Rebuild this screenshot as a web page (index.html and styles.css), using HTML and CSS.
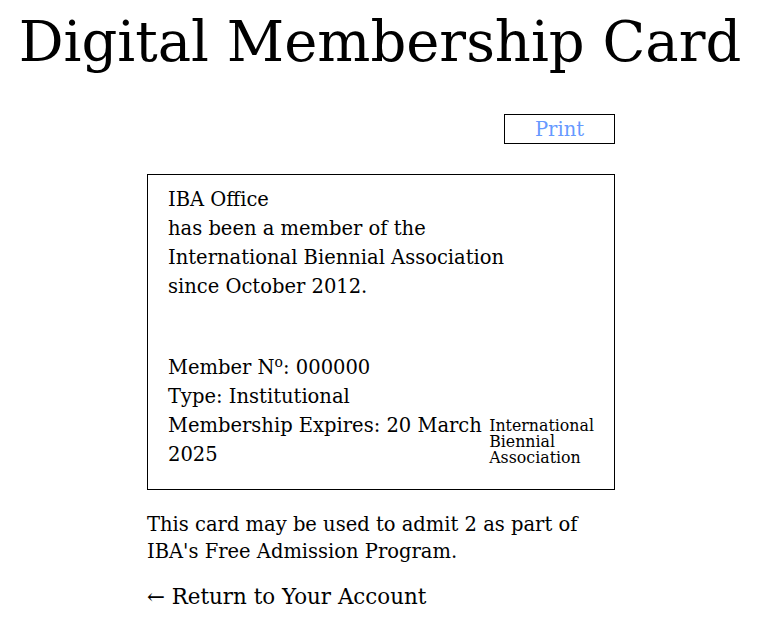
FILE: index.html
```html
<!DOCTYPE html>
<html>
<head>
<meta charset="utf-8">
<link rel="stylesheet" href="styles.css">
</head>
<body>
<h1 class="title">Digital Membership Card</h1>
<div class="wrap">
  <div class="actions"><button class="print">Print</button></div>
  <div class="card">
    <div class="intro">
      <div>IBA Office</div>
      <div>has been a member of the</div>
      <div>International Biennial Association</div>
      <div>since October 2012.</div>
    </div>
    <div class="bottom">
      <div class="details">
        <div>Member N<sup>o</sup>: 000000</div>
        <div>Type: Institutional</div>
        <div>Membership Expires: 20 March 2025</div>
      </div>
      <div class="logo">International<br>Biennial<br>Association</div>
    </div>
  </div>
  <p class="note">This card may be used to admit 2 as part of IBA's Free Admission Program.</p>
  <a class="back" href="#">← Return to Your Account</a>
</div>
</body>
</html>
```
FILE: styles.css
```css
body {
  margin: 0;
  font-family: "DejaVu Serif", serif;
  color: #000;
  background: #fff;
}
.title {
  margin: 10px 0 0;
  text-align: center;
  font-weight: normal;
  font-size: 56px;
  line-height: 64px;
}
.wrap {
  width: 468px;
  margin: 40px 0 0 calc(50% - 233px);
  font-size: 19.5px;
}
.actions {
  display: flex;
  justify-content: flex-end;
}
.print {
  width: 111px;
  height: 30px;
  border: 1px solid #000;
  background: #fff;
  color: #6699ff;
  font-family: inherit;
  font-size: 19.5px;
  padding: 0;
}
.card {
  margin-top: 30px;
  border: 1px solid #000;
  padding: 10px 20px 20px;
  line-height: 29px;
  display: flex;
  flex-direction: column;
  gap: 52px;
}
.bottom {
  display: flex;
  align-items: flex-end;
  gap: 2px;
}
.details {
  flex: 1;
  min-width: 0;
}
sup {
  font-size: 14px;
  line-height: 0;
}
.logo {
  font-size: 15.8px;
  line-height: 16px;
  padding-bottom: 3px;
  flex: none;
}
.note {
  margin: 21px 0 0;
  line-height: 27px;
}
.back {
  display: block;
  margin-top: 19px;
  color: #000;
  text-decoration: none;
  font-size: 21.4px;
}
```
